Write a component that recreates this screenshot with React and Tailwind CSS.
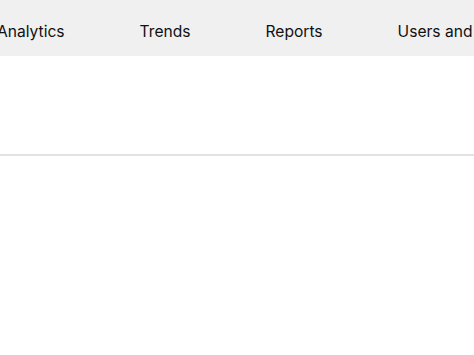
export default function App() {
  const tabs = ['Analytics', 'Trends', 'Reports', 'Users and Roles']

  return (
    <div className="w-[474px] h-[355px] bg-white overflow-hidden" style={{ fontFamily: 'Inter, "Noto Sans", sans-serif' }}>
      {/* tab strip, scrolled a bit */}
      <div className="h-[56px] bg-[#f0f0f0] overflow-hidden flex items-center pt-[8px]">
        <div className="flex gap-[75px] ml-[-3px] whitespace-nowrap">
          {tabs.map(t => (
            <span key={t} className="text-[15.6px] text-[#111] leading-none">{t}</span>
          ))}
        </div>
      </div>
      <div className="h-[98px]" />
      <div className="h-[2px] bg-[#e2e2e2]" />
    </div>
  )
}
